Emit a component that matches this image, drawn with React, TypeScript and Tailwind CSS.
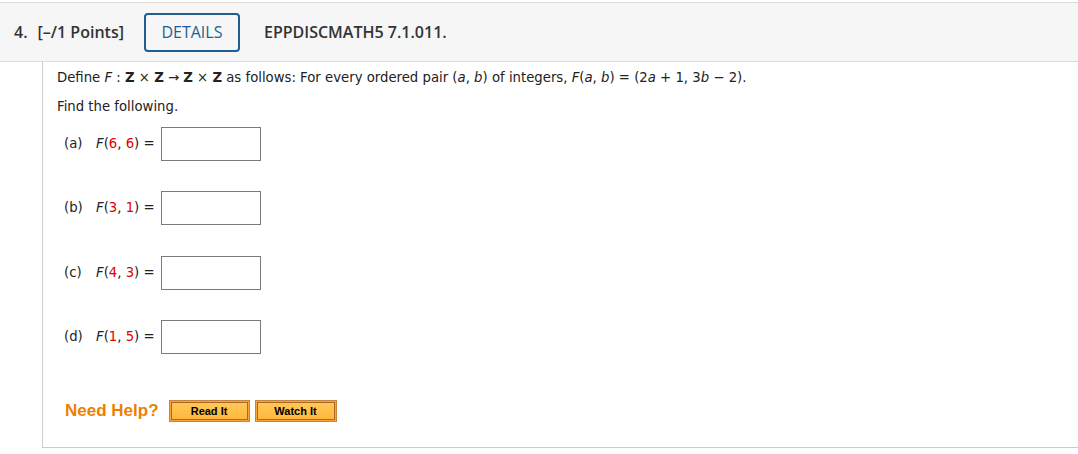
import React from "react";

const body = { fontFamily: '"DejaVu Sans", Verdana, sans-serif' };

function Row({ label, a, b }: { label: string; a: string; b: string }) {
  return (
    <div className="flex items-center h-[34px]">
      <span className="w-[39px] pl-[7px] text-[#222] whitespace-pre">({label})</span>
      <span className="w-[58px] text-[#222] whitespace-pre">
        <i>F</i>(<span className="text-[#e00000]">{a}</span>, <span className="text-[#e00000]">{b}</span>) =
      </span>
      <div className="ml-[7px] w-[100px] h-[34px] border border-[#7a7a7a] bg-white" />
    </div>
  );
}

function HelpButton({ children, w }: { children: React.ReactNode; w: string }) {
  return (
    <div className={`${w} h-[22px] border border-[#c8843a] bg-[#f5a53c] p-[1px]`}>
      <div className="h-full border border-[#a86a22] bg-gradient-to-b from-[#ffc85a] to-[#ffb83a] flex items-center justify-center text-[11px] font-bold text-black" style={{ fontFamily: '"Liberation Sans", Arial, sans-serif' }}>
        {children}
      </div>
    </div>
  );
}

export default function App() {
  return (
    <div className="w-[1078px] h-[454px] bg-white pt-[2px]">
      <div
        className="h-[60px] bg-[#f6f6f6] border-y border-[#dcdcdc] flex items-center text-[16px] font-semibold text-[#333]"
        style={{ fontFamily: '"Open Sans", sans-serif' }}
      >
        <span className="ml-[14px]">4.</span>
        <span className="ml-[10px]">[–/1 Points]</span>
        <div className="ml-[20px] w-[96px] h-[39px] border-2 border-[#1d5f95] rounded-[4px] flex items-center justify-center text-[#1d5f95] font-normal text-[16px]">
          DETAILS
        </div>
        <span className="ml-[24px]">EPPDISCMATH5 7.1.011.</span>
      </div>
      <div
        className="ml-[42px] h-[386px] border-l border-b border-[#cccccc] pl-[14px] pt-[8px] text-[13.25px] leading-[16px] text-[#222]"
        style={body}
      >
        <div className="whitespace-pre">
          Define <i>F</i> : <b>Z</b> × <b>Z</b> → <b>Z</b> × <b>Z</b> as follows: For every ordered pair (<i>a</i>, <i>b</i>) of integers, <i>F</i>(<i>a</i>, <i>b</i>) = (2<i>a</i> + 1, 3<i>b</i> − 2).
        </div>
        <div className="mt-[13px]">Find the following.</div>
        <div className="mt-[12px] flex flex-col gap-[30px]">
          <Row label="a" a="6" b="6" />
          <Row label="b" a="3" b="1" />
          <div className="mt-[1px]">
            <Row label="c" a="4" b="3" />
          </div>
          <Row label="d" a="1" b="5" />
        </div>
        <div className="mt-[46px] flex items-center">
          <span
            className="ml-[8px] text-[17px] font-bold text-[#ee7f00]"
            style={{ fontFamily: '"Liberation Sans", Arial, sans-serif' }}
          >
            Need Help?
          </span>
          <div className="ml-[10px]">
            <HelpButton w="w-[81px]">Read It</HelpButton>
          </div>
          <div className="ml-[5px]">
            <HelpButton w="w-[82px]">Watch It</HelpButton>
          </div>
        </div>
      </div>
    </div>
  );
}
